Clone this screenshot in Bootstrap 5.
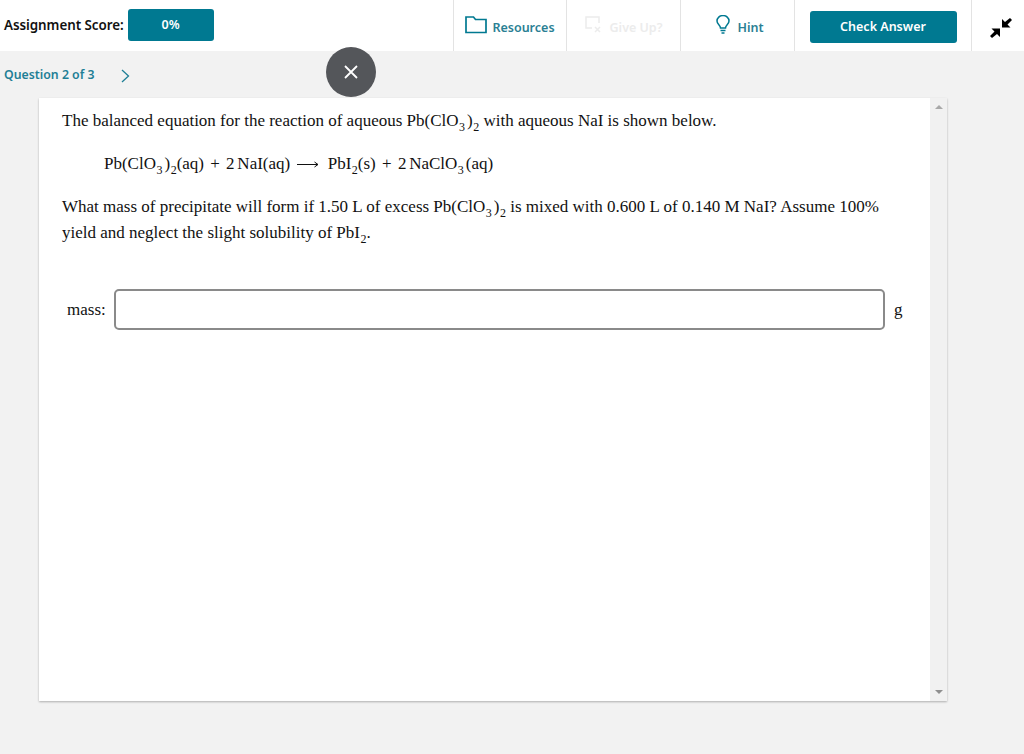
<!DOCTYPE html>
<html lang="en">
<head>
<meta charset="utf-8">
<title>Assignment</title>
<link href="https://cdn.jsdelivr.net/npm/bootstrap@5.3.0/dist/css/bootstrap.min.css" rel="stylesheet">
<style>
html,body{height:100%}
body{background:#f2f2f2;font-family:"Noto Sans","Open Sans",sans-serif;overflow:hidden}
.top-strip{height:51px;background:#fff}
.score-label{font-size:13.4px;font-weight:600;color:#111;padding-left:4px;letter-spacing:-.05px;margin-top:-1px}
.score-box{width:86px;height:32px;margin-left:4px;margin-top:-1px;background:#007991;border-radius:3px;color:#fff;font-size:12.5px;font-weight:600;padding-top:1px}
.tool-cell{width:114px;border-left:1px solid #e3e3e3;font-size:12.5px;font-weight:600;color:#2b7f94;gap:5px}
.tool-cell.first{width:113px}
.tool-cell.off{color:#ececec;gap:9px}
.tool-cell.tip{gap:7px;padding-left:5px}
.tool-cell span{margin-top:5px}
.tool-cell svg{margin-bottom:2px}
.check-cell{width:177px;border-left:1px solid #e3e3e3}
.check-btn{width:147px;height:32px;margin-top:3px;background:#007991;border-radius:3px;color:#fff;font-size:12.5px;font-weight:600;border:0;padding:0}
.shrink-cell{width:53px;border-left:1px solid #e3e3e3;padding:4px 0 0 6px}
.q-row{height:47px;padding-left:4px;padding-top:2px;font-size:12.3px;font-weight:600;color:#1f7f96;gap:26px;position:relative}
.close-disc{position:absolute;left:326px;top:-4px;width:50px;height:50px;border-radius:50%;background:#54565a}
.sheet{width:908px;height:603px;margin-left:39px;background:#fff;box-shadow:0 1px 2px rgba(0,0,0,.28)}
.sheet-body{padding:10px 0 0 23px;font-family:"Liberation Serif",serif;font-size:17px;line-height:26px;color:#111}
.sheet-body sub{font-size:12px;bottom:-.42em;line-height:0;margin-left:.5px}
.sheet-body sub.low3{margin-right:2px}
.eq-line{padding-left:42px;margin:17px 0 17px}
.eq-op{margin:0 2px}
.eq-thin{margin-right:-1.5px}
.eq-arrow{display:inline-block;width:22px;height:9px;margin:0 8.500px 0 7px;vertical-align:baseline;overflow:visible}
.para{width:830px}
.answer-row{margin-top:43px;gap:9px;font-size:17px}
.mass-label{padding-left:5px;width:43px;white-space:nowrap}
.mass-input{width:771px;height:41px;border:2px solid #8a8a8a;border-radius:5px;background:#fff}
.rail{width:17px;background:#f1f1f1;padding:7px 0}
.tri-up{border-left:4px solid transparent;border-right:4px solid transparent;border-bottom:4px solid #a8a8a8}
.tri-down{border-left:4px solid transparent;border-right:4px solid transparent;border-top:4px solid #8f8f8f}
</style>
</head>
<body>
<header class="top-strip d-flex align-items-center">
  <div class="d-flex align-items-center me-auto">
    <span class="score-label">Assignment Score:</span>
    <div class="score-box d-flex align-items-center justify-content-center">0%</div>
  </div>
  <div class="tool-cell first d-flex align-items-center justify-content-center h-100">
    <svg width="22" height="18" viewBox="0 0 22 18" fill="none" stroke="#007991" stroke-width="1.700"><path d="M1 16.500V1H8.500L10.500 3.500H21V16.500Z"/></svg>
    <span>Resources</span>
  </div>
  <div class="tool-cell off d-flex align-items-center justify-content-center h-100">
    <svg width="16" height="17" viewBox="0 0 16 17" fill="none" stroke="#ececec" stroke-width="1.500"><path d="M7 12H1V1H14V7"/><path d="M10 11L15 16M15 11L10 16"/></svg>
    <span>Give Up?</span>
  </div>
  <div class="tool-cell tip d-flex align-items-center justify-content-center h-100">
    <svg width="14" height="19" viewBox="0 0 14 19" fill="none" stroke="#007991" stroke-width="1.500"><path d="M4.500 13C4.500 10 1 9.500 1 6A6 5.500 0 0 1 13 6C13 9.500 9.500 10 9.500 13Z"/><path d="M4.500 15.500H9.500M5.500 18H8.500"/></svg>
    <span>Hint</span>
  </div>
  <div class="check-cell d-flex align-items-center justify-content-center h-100">
    <button class="check-btn" type="button">Check Answer</button>
  </div>
  <div class="shrink-cell d-flex align-items-center justify-content-center h-100">
    <svg width="24" height="24" viewBox="0 0 24 24" fill="#000"><path d="M21 2L23 4L18.500 8.500L21.500 11.500H13V3L16 6Z"/><path d="M3 22L1 20L5.500 15.500L2.500 12.500H11V21L8 18Z"/></svg>
  </div>
</header>
<div class="q-row d-flex align-items-center">
  <span>Question 2 of 3</span>
  <svg width="9" height="14" viewBox="0 0 9 14" fill="none" stroke="#1f7f96" stroke-width="1.300"><path d="M1 1L7.500 7L1 13"/></svg>
  <div class="close-disc d-flex align-items-center justify-content-center">
    <svg width="16" height="16" viewBox="0 0 16 16" stroke="#fff" stroke-width="1.800" fill="none"><path d="M2 2L14 14M14 2L2 14"/></svg>
  </div>
</div>
<main class="sheet d-flex">
  <div class="sheet-body flex-grow-1">
    <div class="para">The balanced equation for the reaction of aqueous Pb(ClO<sub class="low3">3</sub>)<sub>2</sub> with aqueous NaI is shown below.</div>
    <div class="eq-line">Pb(ClO<sub class="low3">3</sub>)<sub>2</sub>(aq) <span class="eq-op">+</span> <span class="eq-thin">2</span> NaI(aq)<svg class="eq-arrow" viewBox="0 0 22 9" fill="none" stroke="#111" stroke-width="1"><path d="M0 4.500H21M17.500 2L21 4.500L17.500 7"/></svg>PbI<sub>2</sub>(s) <span class="eq-op">+</span> <span class="eq-thin">2</span> NaClO<sub class="low3">3</sub>(aq)</div>
    <div class="para">What mass of precipitate will form if 1.50 L of excess Pb(ClO<sub class="low3">3</sub>)<sub>2</sub> is mixed with 0.600 L of 0.140 M NaI? Assume 100% yield and neglect the slight solubility of PbI<sub>2</sub>.</div>
    <div class="answer-row d-flex align-items-center">
      <span class="mass-label">mass:</span>
      <div class="mass-input"></div>
      <span>g</span>
    </div>
  </div>
  <div class="rail d-flex flex-column align-items-center justify-content-between">
    <div class="tri-up"></div>
    <div class="tri-down"></div>
  </div>
</main>
<script src="https://cdn.jsdelivr.net/npm/bootstrap@5.3.0/dist/js/bootstrap.bundle.min.js"></script>
</body>
</html>
